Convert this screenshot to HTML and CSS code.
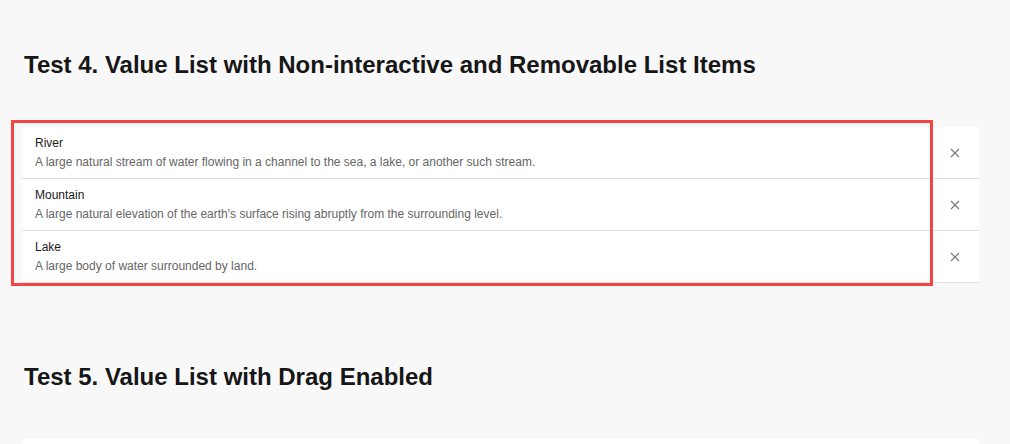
FILE: index.html
```html
<!DOCTYPE html>
<html>
<head>
<meta charset="utf-8">
<link rel="stylesheet" href="styles.css">
</head>
<body>
<main class="page">
  <section class="test">
    <h2 class="test-title">Test 4. Value List with Non-interactive and Removable List Items</h2>
    <div class="list-wrap">
      <ul class="value-list">
        <li class="item">
          <div class="item-body">
            <div class="item-label">River</div>
            <div class="item-desc">A large natural stream of water flowing in a channel to the sea, a lake, or another such stream.</div>
          </div>
          <button class="remove" aria-label="Remove River"><svg width="10" height="10" viewBox="0 0 10 10"><path d="M1 1L9 9M9 1L1 9" stroke="#777" stroke-width="1.1" fill="none"/></svg></button>
        </li>
        <li class="item">
          <div class="item-body">
            <div class="item-label">Mountain</div>
            <div class="item-desc">A large natural elevation of the earth's surface rising abruptly from the surrounding level.</div>
          </div>
          <button class="remove" aria-label="Remove Mountain"><svg width="10" height="10" viewBox="0 0 10 10"><path d="M1 1L9 9M9 1L1 9" stroke="#777" stroke-width="1.1" fill="none"/></svg></button>
        </li>
        <li class="item">
          <div class="item-body">
            <div class="item-label">Lake</div>
            <div class="item-desc">A large body of water surrounded by land.</div>
          </div>
          <button class="remove" aria-label="Remove Lake"><svg width="10" height="10" viewBox="0 0 10 10"><path d="M1 1L9 9M9 1L1 9" stroke="#777" stroke-width="1.1" fill="none"/></svg></button>
        </li>
      </ul>
      <div class="highlight"></div>
    </div>
  </section>
  <section class="test">
    <h2 class="test-title">Test 5. Value List with Drag Enabled</h2>
    <div class="list-stub"></div>
  </section>
</main>
</body>
</html>
```
FILE: styles.css
```css
html, body {
  margin: 0;
  padding: 0;
  background: #f8f8f8;
  font-family: "Liberation Sans", Arial, sans-serif;
  color: #1a1a1a;
}
.page {
  padding: 51px 31px 0 22px;
  display: flex;
  flex-direction: column;
  gap: 80px;
}
.test-title {
  margin: 0 0 48px 2px;
  font-size: 24px;
  line-height: 28px;
  font-weight: bold;
  color: #161616;
}
.list-wrap {
  position: relative;
}
.value-list {
  list-style: none;
  margin: 0;
  padding: 0;
  background: #fff;
}
.item {
  display: flex;
  align-items: center;
  border-bottom: 1px solid #e0e0e0;
}
.item-body {
  flex: 1;
  padding: 8px 12px 8px 13px;
}
.item-label {
  font-size: 12px;
  line-height: 16px;
  color: #1a1a1a;
}
.item-desc {
  margin-top: 3px;
  font-size: 12px;
  line-height: 16px;
  color: #666;
}
.remove {
  width: 48px;
  height: 51px;
  border: 0;
  background: transparent;
  padding: 0;
  display: flex;
  align-items: center;
  justify-content: center;
}
.highlight {
  position: absolute;
  left: -11px;
  top: -7px;
  width: 916px;
  height: 160px;
  border: 3px solid #f44444;
  pointer-events: none;
}
.list-stub {
  background: #fff;
  height: 60px;
}
```
